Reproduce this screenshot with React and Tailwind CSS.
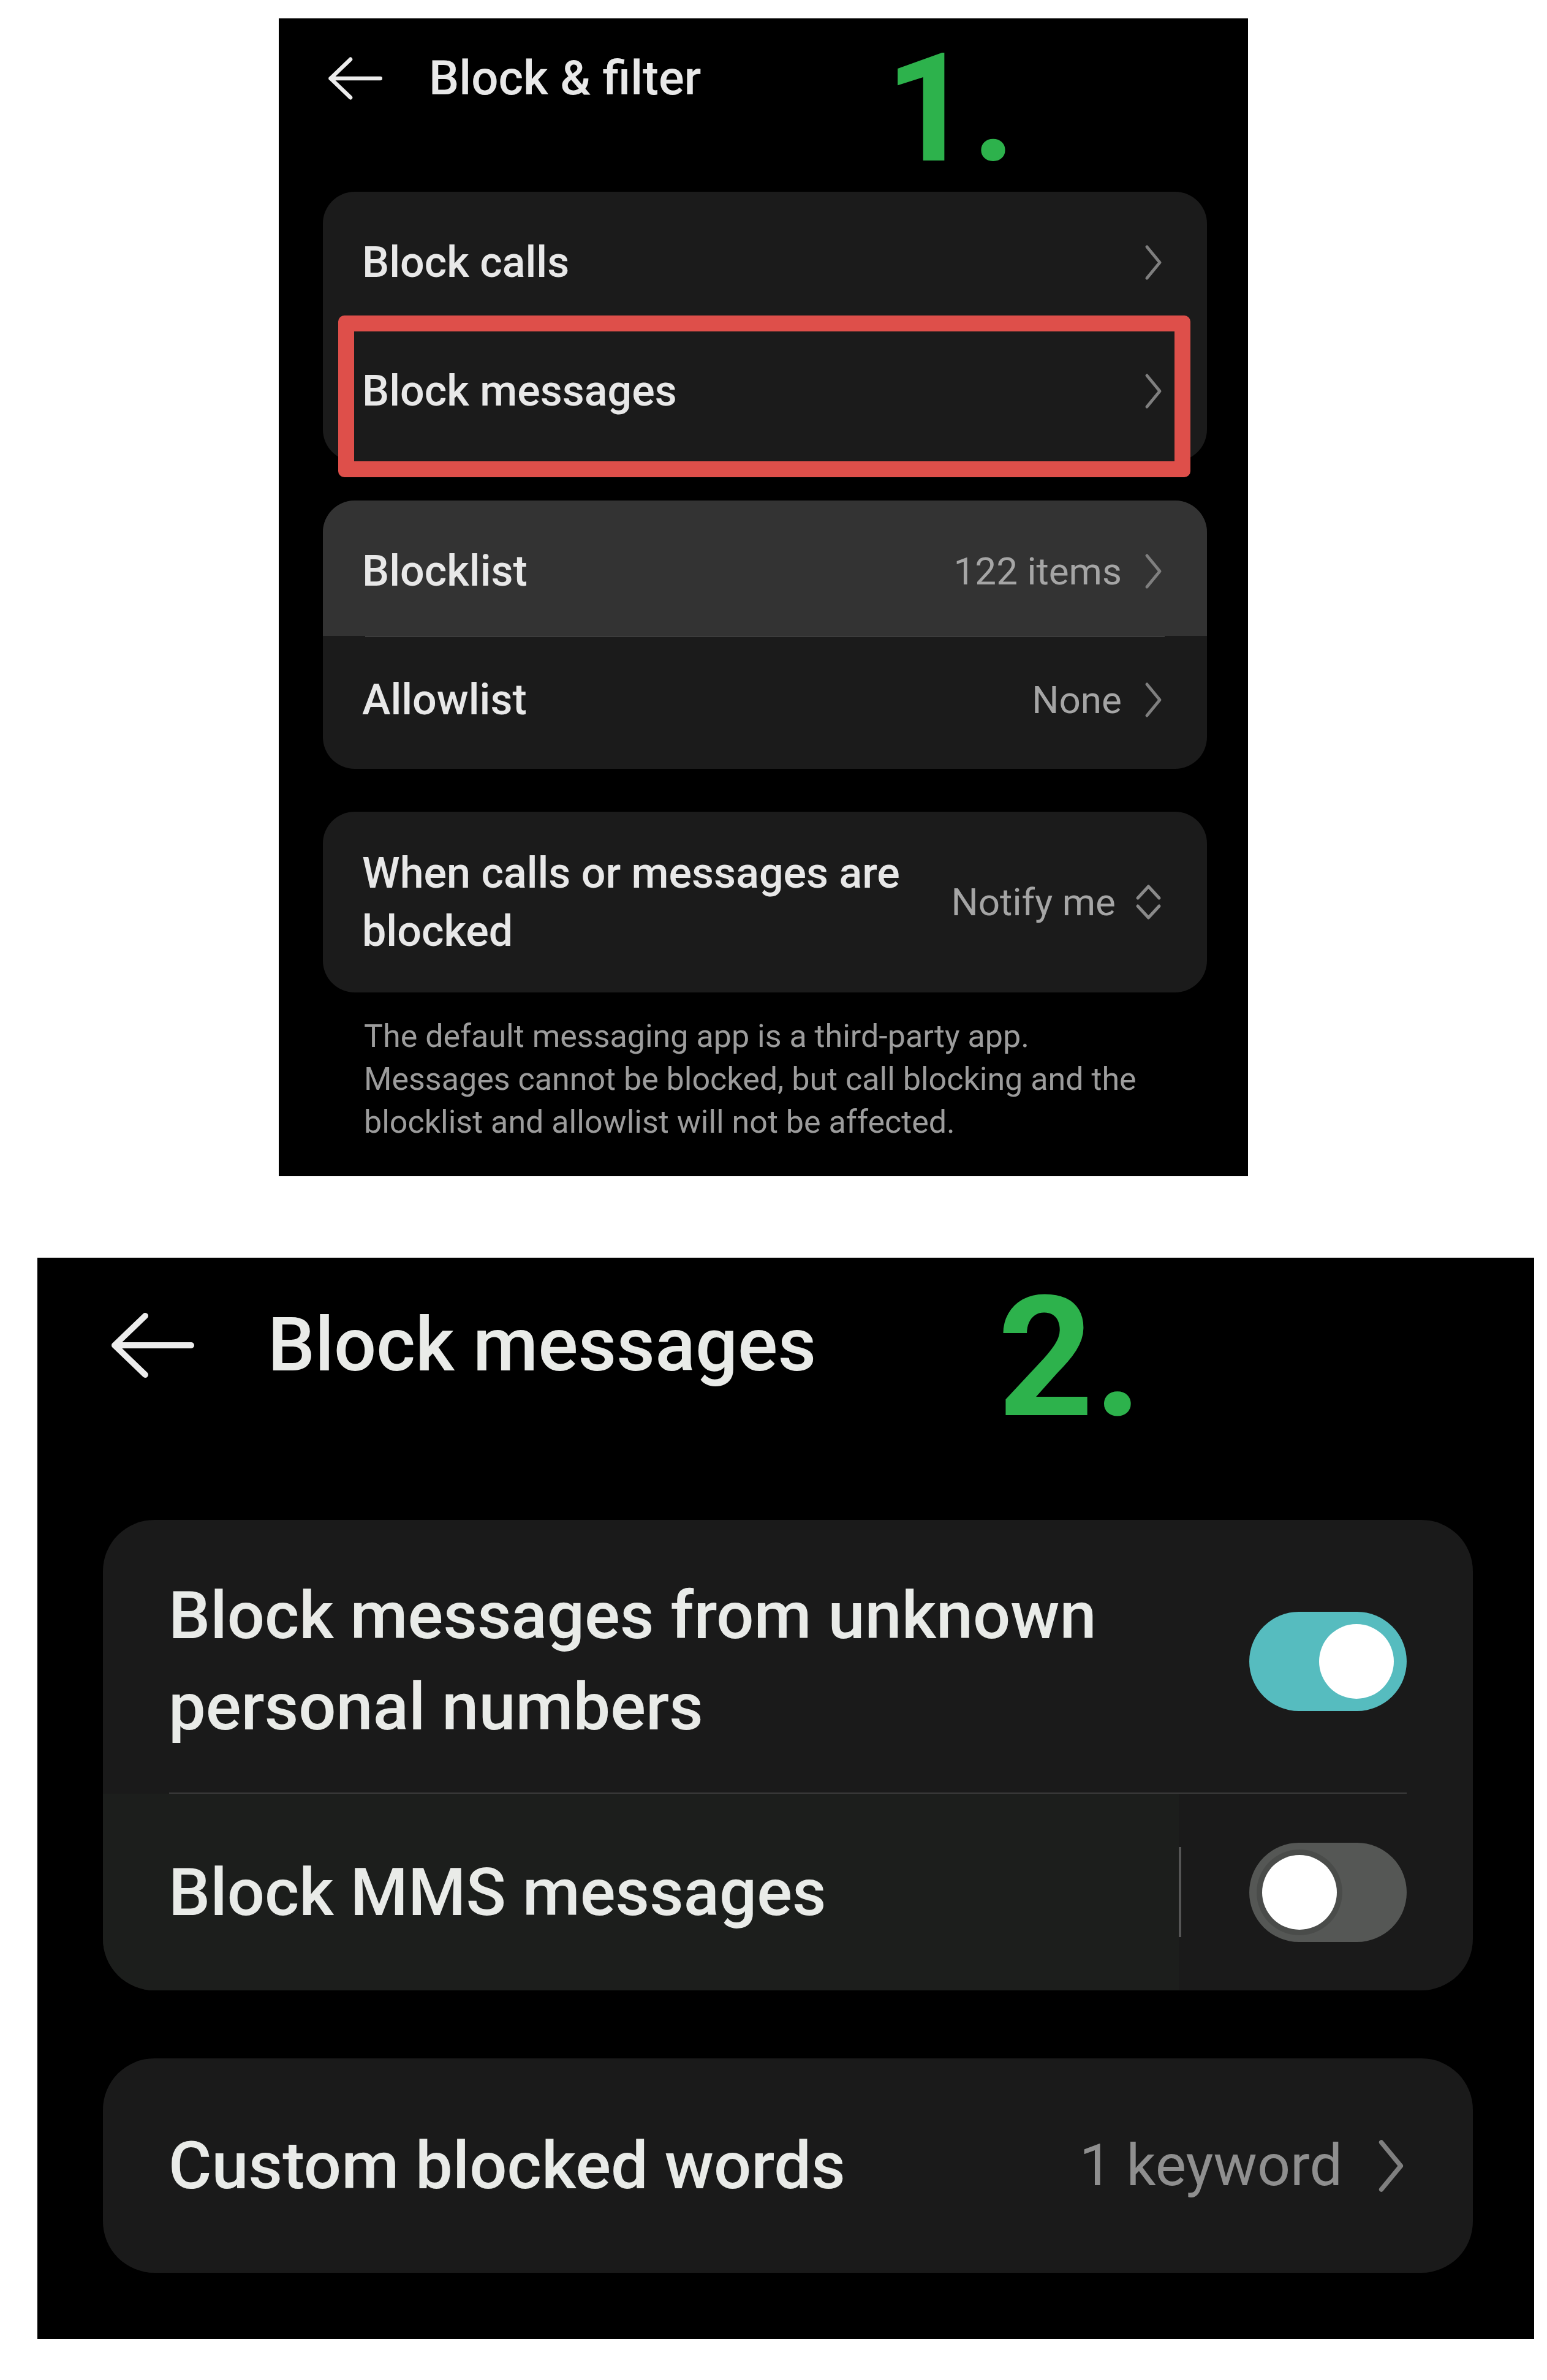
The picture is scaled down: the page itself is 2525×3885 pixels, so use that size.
import React from 'react';

// back arrow used in both headers, scales with its box
const BackArrow = ({ className }) => (
    <svg viewBox="0 0 137 108" className={className} fill="none" stroke="#ececec" strokeWidth="10" strokeLinecap="round" strokeLinejoin="round">
        <path d="M132 54H7M57 6L7 54l50 48" />
    </svg>
);

const Chevron = ({ className }) => (
    <svg viewBox="0 0 31 59" className={className} fill="none" stroke="#7f7f7f" strokeWidth="5" strokeLinecap="round" strokeLinejoin="round">
        <path d="M5 4l21 25.5L5 55" />
    </svg>
);

const UpDown = ({ className }) => (
    <svg viewBox="0 0 47 63" className={className} fill="none" stroke="#8a8a8a" strokeWidth="5" strokeLinecap="round" strokeLinejoin="round">
        <path d="M6 25L23.5 6 41 25M6 38l17.5 19L41 38" />
    </svg>
);

const Toggle = ({ on }) => (
    <div className={on
        ? 'flex h-[162px] w-[257px] shrink-0 items-center justify-end rounded-full bg-[#56bcbf] px-[21px]'
        : 'flex h-[162px] w-[257px] shrink-0 items-center justify-start rounded-full bg-[#555755] px-[21px]'}
    >
        <div className={on
            ? 'size-[122px] rounded-full bg-white'
            : 'size-[122px] rounded-full bg-white shadow-[0_0_0_9px_rgba(0,0,0,0.12)]'}
        />
    </div>
);

const NavRow = ({ label, value, height, highlight }) => (
    <div className={`flex items-center justify-between pl-[64px] pr-[72px] ${height} ${highlight ? 'bg-[#333333]' : ''}`}>
        <span className="text-[70px] font-medium text-[#e8e8e8]">{label}</span>
        <div className="flex items-center">
            {value && <span className="mr-[36px] text-[62px] text-[#a5a5a5]">{value}</span>}
            <Chevron className="h-[59px] w-[31px]" />
        </div>
    </div>
);

const BlockFilterScreen = () => (
    <section className="relative ml-[455px] mt-[30px] h-[1890px] w-[1582px] bg-black">
        <header className="flex h-[196px] items-center">
            <BackArrow className="ml-[80px] h-[72px] w-[89px]" />
            <h1 className="ml-[76px] text-[78px] font-medium leading-none text-[#e8e8e8]">Block &amp; filter</h1>
        </header>
        <span className="absolute left-[990px] top-[25px] text-[246px] font-bold leading-none text-[#2db24c]">1.</span>

        <div className="ml-[72px] mt-[87px] w-[1443px] rounded-[52px] bg-[#1b1b1b] py-[10px]">
            <NavRow label="Block calls" height="h-[210px]" />
            <NavRow label="Block messages" height="h-[210px]" />
        </div>

        {/* red outline around the "Block messages" row */}
        <div className="absolute left-[97px] top-[485px] h-[264px] w-[1391px] rounded-[10px] border-[26px] border-[#de4f4a]" />

        <div className="ml-[72px] mt-[64px] w-[1443px] overflow-hidden rounded-[52px] bg-[#1b1b1b]">
            <NavRow label="Blocklist" value="122 items" height="h-[221px] pt-[10px]" highlight />
            <div className="h-[2px] bg-[#1b1b1b]">
                <div className="mx-[69px] h-full bg-[#3c3c3c]" />
            </div>
            <NavRow label="Allowlist" value="None" height="h-[215px] pb-[10px]" />
        </div>

        <div className="ml-[72px] mt-[70px] flex h-[295px] w-[1443px] items-center justify-between rounded-[52px] bg-[#1b1b1b] pl-[64px] pr-[72px]">
            <span className="text-[70px] font-medium leading-[95px] text-[#e8e8e8]">
                When calls or messages are<br />blocked
            </span>
            <div className="flex items-center">
                <span className="mr-[30px] text-[62px] text-[#a5a5a5]">Notify me</span>
                <UpDown className="h-[63px] w-[47px]" />
            </div>
        </div>

        <p className="ml-[139px] mt-[37px] text-[52px] leading-[70px] text-[#9c9c9c]">
            The default messaging app is a third-party app.<br />
            Messages cannot be blocked, but call blocking and the<br />
            blocklist and allowlist will not be affected.
        </p>
    </section>
);

const BlockMessagesScreen = () => (
    <section className="relative ml-[61px] mt-[133px] h-[1765px] w-[2443px] bg-black">
        <header className="flex h-[286px] items-center">
            <BackArrow className="ml-[119px] h-[108px] w-[137px]" />
            <h1 className="ml-[120px] text-[122px] font-medium leading-none text-[#e9ebe8]">Block messages</h1>
        </header>
        <span className="absolute left-[1567px] top-[27px] text-[274px] font-bold leading-none text-[#2db24c]">2.</span>

        <div className="ml-[107px] mt-[142px] w-[2236px] overflow-hidden rounded-[84px] bg-[#1a1a1a]">
            <div className="flex h-[445px] items-center justify-between pl-[107px] pr-[108px] pt-[16px]">
                <span className="text-[108px] font-medium leading-[149px] text-[#e9ebe8]">
                    Block messages from unknown<br />personal numbers
                </span>
                <Toggle on />
            </div>
            <div className="h-[2px] bg-[#1a1a1a]">
                <div className="mx-[108px] h-full bg-[#3b3b3b]" />
            </div>
            <div className="flex h-[321px]">
                <div className="flex w-[1756px] items-center bg-[#1c1e1c] pl-[107px]">
                    <span className="text-[108px] font-medium text-[#e9ebe8]">Block MMS messages</span>
                </div>
                <div className="flex flex-1 items-center justify-between pr-[108px]">
                    <div className="h-[147px] w-[4px] bg-[#555555]" />
                    <Toggle on={false} />
                </div>
            </div>
        </div>

        <div className="ml-[107px] mt-[111px] flex h-[350px] w-[2236px] items-center justify-between rounded-[84px] bg-[#1a1a1a] pl-[107px] pr-[110px]">
            <span className="text-[108px] font-medium text-[#e9ebe8]">Custom blocked words</span>
            <div className="flex items-center">
                <span className="mr-[56px] text-[95px] text-[#8f8f8f]">1 keyword</span>
                <Chevron className="h-[89px] w-[47px]" />
            </div>
        </div>
    </section>
);

export default function App() {
    return (
        <div className="min-h-[3885px] overflow-hidden bg-white pb-[67px] font-[family-name:Roboto,sans-serif]">
            <BlockFilterScreen />
            <BlockMessagesScreen />
        </div>
    );
}
